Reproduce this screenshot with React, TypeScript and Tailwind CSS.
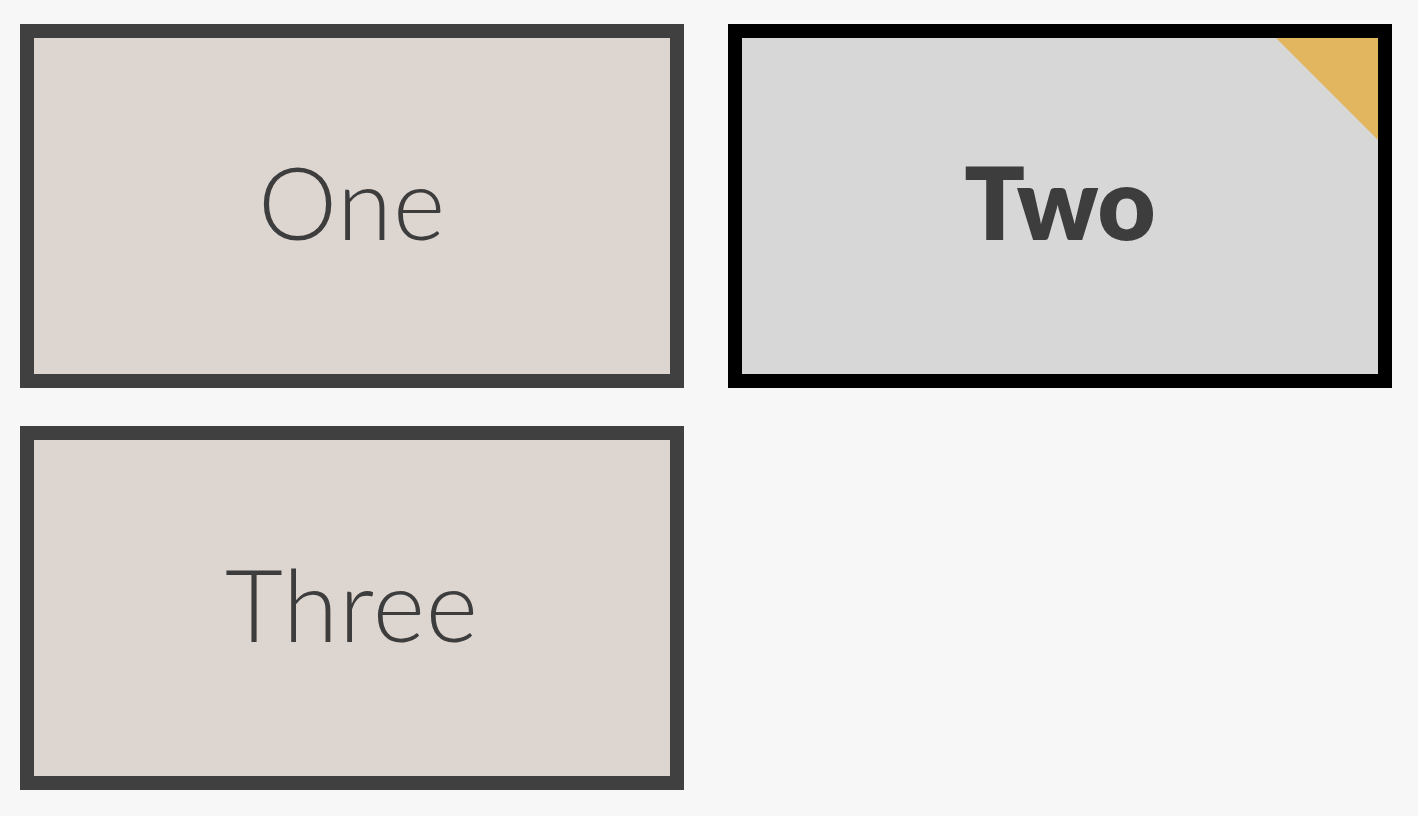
import React from "react";

interface CardProps {
  label: string;
  active?: boolean;
}

function Card({ label, active }: CardProps) {
  return (
    <div
      className={
        active
          ? "relative flex h-[364px] items-center justify-center overflow-hidden border-[14px] border-black bg-[#d7d7d7] pb-[10px]"
          : "relative flex h-[364px] items-center justify-center overflow-hidden border-[14px] border-[#404040] bg-[#ddd5d0] pb-[10px]"
      }
    >
      {active && (
        <svg
          className="absolute right-0 top-0"
          width="102"
          height="102"
          viewBox="0 0 102 102"
        >
          <polygon points="0,0 102,0 102,102" fill="#e1b65e" />
        </svg>
      )}
      <span
        className={
          active
            ? "text-[100px] font-extrabold leading-none text-[#3d3d3d]"
            : "text-[100px] font-light leading-none tracking-[1px] text-[#3d3d3d]"
        }
        style={{ fontFamily: "Lato, 'Open Sans', sans-serif" }}
      >
        {label}
      </span>
    </div>
  );
}

export default function App() {
  return (
    <div className="min-h-[816px] bg-[#f7f7f7] pl-[20px] pt-[24px]">
      <div className="grid w-[1372px] grid-cols-[664px_664px] gap-x-[44px] gap-y-[38px]">
        <Card label="One" />
        <Card label="Two" active />
        <Card label="Three" />
      </div>
    </div>
  );
}
